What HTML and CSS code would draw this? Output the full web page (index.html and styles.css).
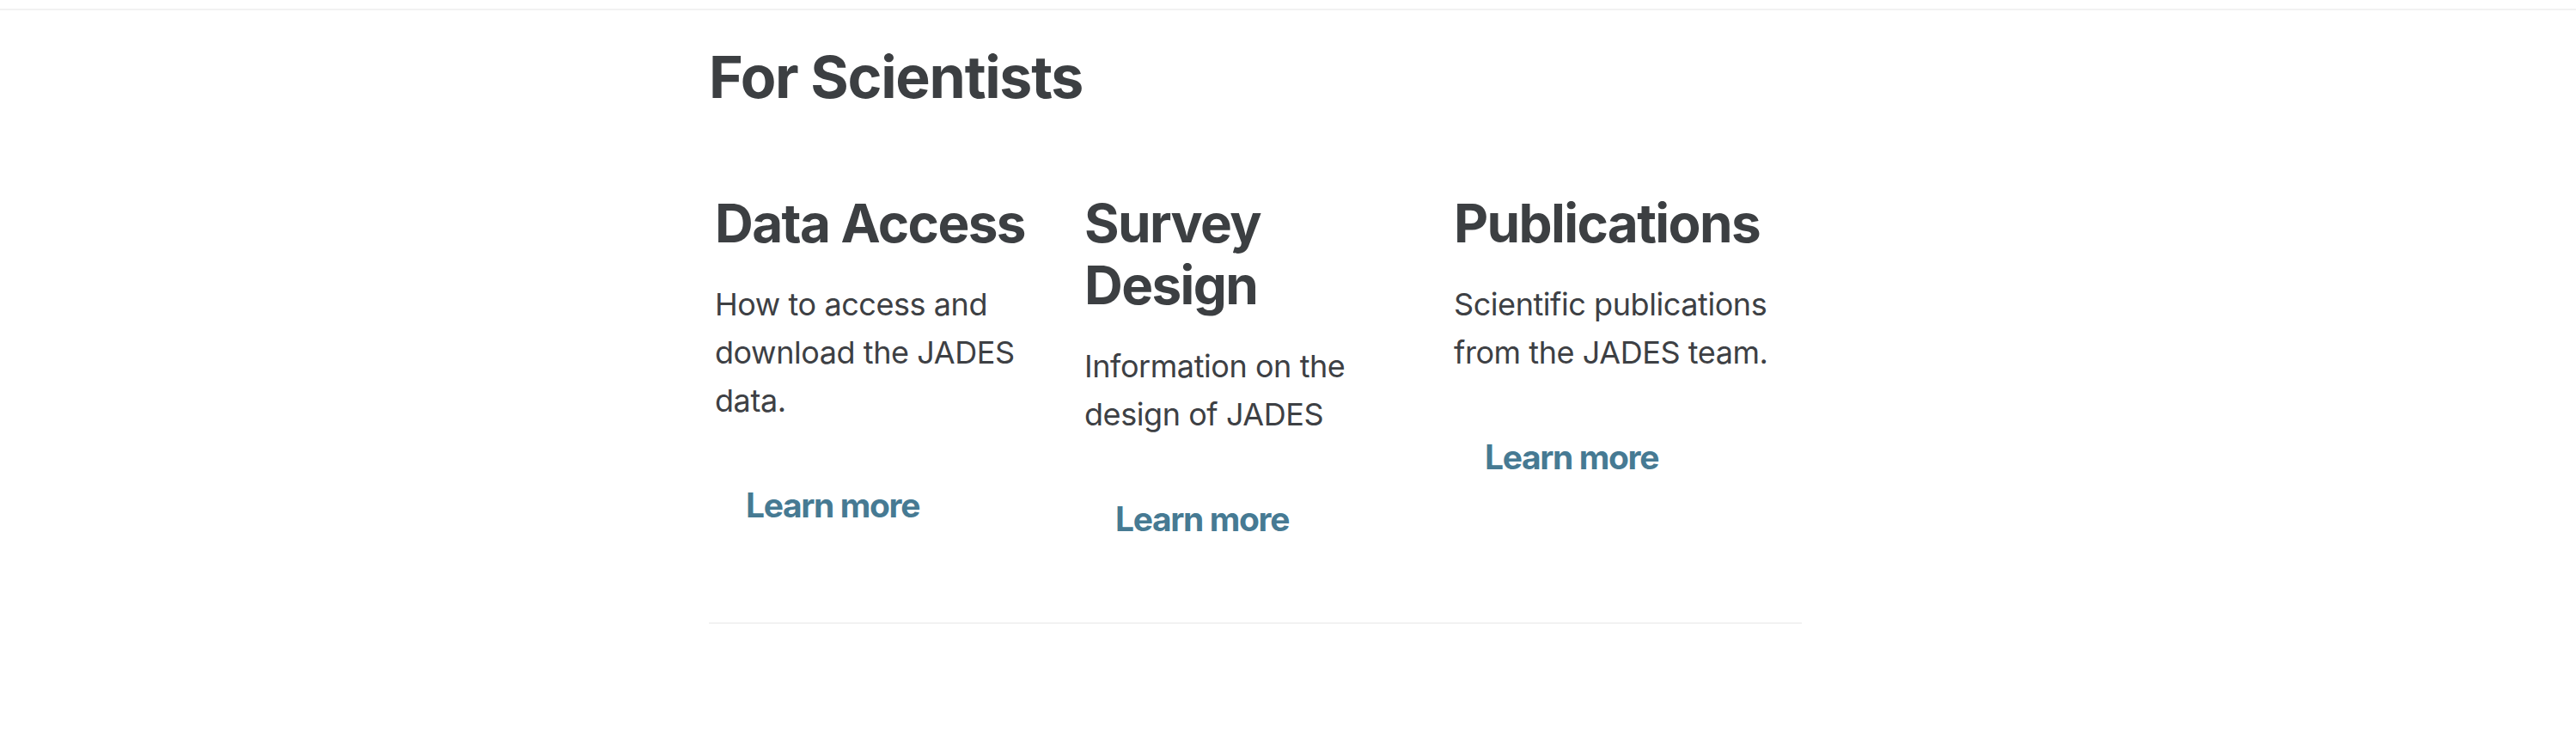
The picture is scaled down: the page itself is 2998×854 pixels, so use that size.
FILE: index.html
```html
<!DOCTYPE html>
<html lang="en">
<head>
<meta charset="utf-8">
<title>For Scientists</title>
<link rel="stylesheet" href="styles.css">
</head>
<body>
<div class="top-rule"></div>
<main class="container">
  <h2 class="section-title">For Scientists</h2>
  <div class="cards">
    <div class="card">
      <h3 class="card-title">Data Access</h3>
      <p class="card-text">How to access and download the JADES data.</p>
      <a class="card-link" href="#">Learn more</a>
    </div>
    <div class="card">
      <h3 class="card-title">Survey Design</h3>
      <p class="card-text">Information on the design of JADES</p>
      <a class="card-link" href="#">Learn more</a>
    </div>
    <div class="card">
      <h3 class="card-title">Publications</h3>
      <p class="card-text">Scientific publications from the JADES team.</p>
      <a class="card-link" href="#">Learn more</a>
    </div>
  </div>
  <div class="bottom-rule"></div>
</main>
</body>
</html>
```

FILE: styles.css
```css
html, body {
  margin: 0;
  padding: 0;
  background: #ffffff;
}
body {
  font-family: Inter, "Noto Sans", sans-serif;
  color: #3d4044;
  padding-top: 10px;
}
.top-rule {
  height: 2px;
  background: #f2f2f2;
}
.container {
  width: 1272px;
  margin-left: 825px;
}
.section-title {
  margin: 37px 0 0 0;
  font-size: 68px;
  line-height: 1.2;
  font-weight: 700;
  letter-spacing: -0.019em;
  color: #3c3f42;
}
.cards {
  display: grid;
  grid-template-columns: repeat(3, 390px);
  column-gap: 40px;
  padding-left: 7px;
  margin-top: 93px;
}
.card {
  display: flex;
  flex-direction: column;
  align-items: flex-start;
}
.card-title {
  margin: 0;
  font-size: 62px;
  line-height: 72px;
  font-weight: 700;
  letter-spacing: -0.026em;
  color: #3c3f42;
}
.card-text {
  margin: 30px 0 0 0;
  font-size: 36px;
  line-height: 56px;
  font-weight: 400;
  letter-spacing: -0.012em;
}
.card-link {
  display: inline-block;
  margin-top: 70px;
  padding: 0 36px;
  font-size: 39px;
  font-weight: 700;
  letter-spacing: -0.035em;
  color: #467a93;
  text-decoration: none;
}
.bottom-rule {
  height: 2px;
  background: #f2f2f2;
  margin-top: 97px;
}
```
